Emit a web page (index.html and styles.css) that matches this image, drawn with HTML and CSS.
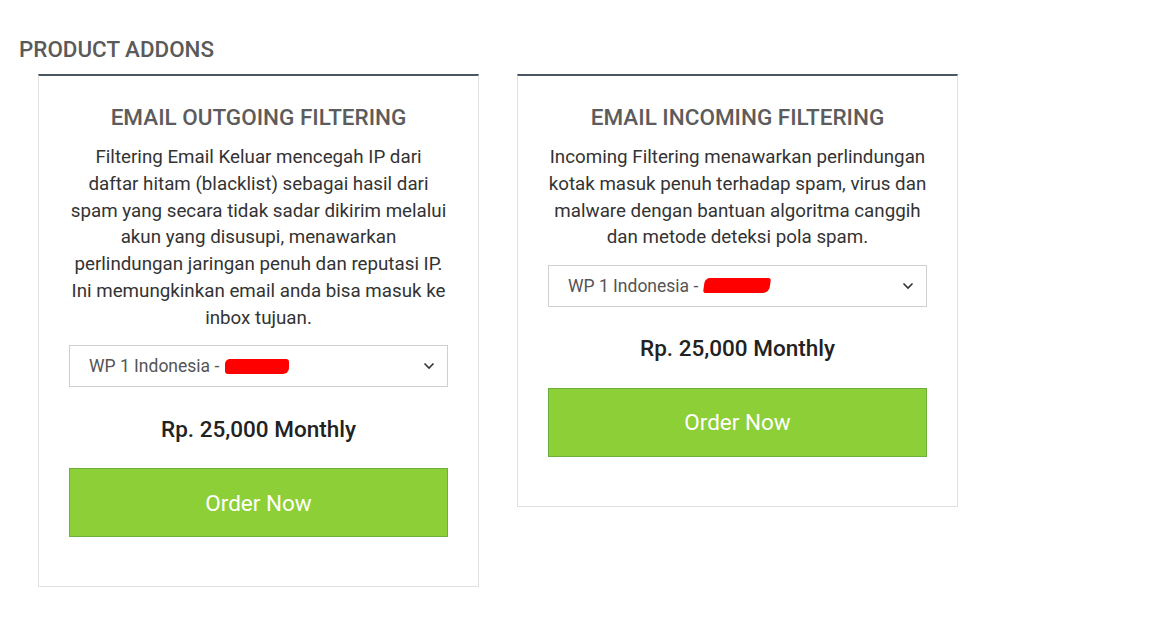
FILE: index.html
```html
<!DOCTYPE html>
<html lang="id">
<head>
<meta charset="utf-8">
<title>Product Addons</title>
<link rel="stylesheet" href="styles.css">
</head>
<body>
<div class="page">
  <h2 class="section-title">PRODUCT ADDONS</h2>
  <div class="addons">
    <div class="addon-card">
      <h3 class="addon-title">EMAIL OUTGOING FILTERING</h3>
      <p class="addon-desc">Filtering Email Keluar mencegah IP dari daftar hitam (blacklist) sebagai hasil dari spam yang secara tidak sadar dikirim melalui akun yang disusupi, menawarkan perlindungan jaringan penuh dan reputasi IP. Ini memungkinkan email anda bisa masuk ke inbox tujuan.</p>
      <div class="select">
        <span class="select-text">WP 1 Indonesia - <span class="redact"></span></span>
        <svg class="chevron" width="12" height="8" viewBox="0 0 12 8"><path d="M1.5 1.5 L6 6 L10.5 1.5" fill="none" stroke="#333" stroke-width="1.6"/></svg>
      </div>
      <div class="price">Rp. 25,000 Monthly</div>
      <button class="order-btn">Order Now</button>
    </div>
    <div class="addon-card">
      <h3 class="addon-title">EMAIL INCOMING FILTERING</h3>
      <p class="addon-desc">Incoming Filtering menawarkan perlindungan kotak masuk penuh terhadap spam, virus dan malware dengan bantuan algoritma canggih dan metode deteksi pola spam.</p>
      <div class="select">
        <span class="select-text">WP 1 Indonesia - <span class="redact redact-2"></span></span>
        <svg class="chevron" width="12" height="8" viewBox="0 0 12 8"><path d="M1.5 1.5 L6 6 L10.5 1.5" fill="none" stroke="#333" stroke-width="1.6"/></svg>
      </div>
      <div class="price">Rp. 25,000 Monthly</div>
      <button class="order-btn">Order Now</button>
    </div>
  </div>
</div>
</body>
</html>
```
FILE: styles.css
```css
* { box-sizing: border-box; }
html, body { margin: 0; padding: 0; background: #fff; }
body { font-family: Roboto, "Liberation Sans", Arial, sans-serif; color: #333; }

.page { padding: 35px 0 0 19px; }

.section-title {
  margin: 0 0 11px 0;
  font-size: 22.4px;
  font-weight: 500;
  line-height: 28px;
  color: #5a5a5a;
}

.addons {
  display: flex;
  align-items: flex-start;
  gap: 38px;
  padding-left: 19px;
}

.addon-card {
  width: 441px;
  border: 1px solid #e0e0e0;
  border-top: 2px solid #4b5663;
  padding: 27px 30px 49px 30px;
  text-align: center;
}

.addon-title {
  margin: 0 0 13px 0;
  font-size: 22.5px;
  font-weight: 500;
  line-height: 28px;
  color: #5c5c5c;
}

.addon-desc {
  margin: 0 0 13.5px 0;
  font-size: 18.75px;
  line-height: 26.79px;
  color: #333;
}

.select {
  display: flex;
  align-items: center;
  justify-content: space-between;
  height: 42px;
  border: 1px solid #cfcfcf;
  padding: 0 12px 0 19px;
  text-align: left;
  background: #fff;
}
.select-text {
  font-size: 17.5px;
  color: #555;
  display: flex;
  align-items: center;
  white-space: pre;
}
.redact {
  display: inline-block;
  width: 64px;
  height: 15px;
  background: #ff0000;
  border-radius: 5px 3px 6px 3px;
  margin-left: 1px;
}
.redact-2 { width: 66px; transform: skewX(-8deg); }
.chevron { display: block; }

.price {
  margin-top: 27.5px;
  font-size: 22.5px;
  font-weight: 500;
  line-height: 28px;
  color: #222;
}

.order-btn {
  display: block;
  width: 100%;
  height: 69px;
  margin-top: 25.5px;
  background: #8dcf36;
  border: 1px solid #6bb03e;
  color: #fff;
  font-family: Roboto, "Liberation Sans", Arial, sans-serif;
  font-size: 22.5px;
  font-weight: 400;
  cursor: pointer;
}
```
